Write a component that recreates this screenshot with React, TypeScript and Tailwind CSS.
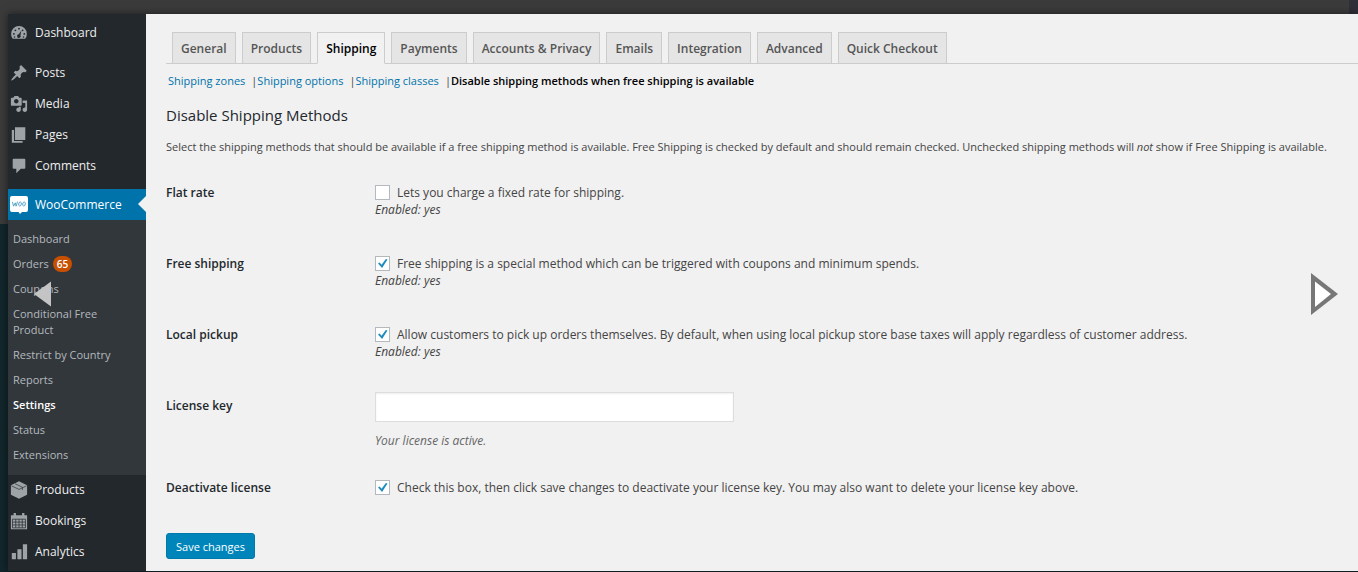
import type { ReactNode } from 'react';

const iconPaths = {
  posts:
    'M10.44 3.02l1.82-1.82 6.36 6.35-1.83 1.82c-1.05-.68-2.48-.57-3.41.36l-.75.75c-.92.93-1.04 2.35-.35 3.41l-1.83 1.82-2.41-2.41-2.8 2.79c-.42.42-3.38 2.71-3.8 2.29s1.86-3.39 2.28-3.81l2.79-2.79L4.1 9.36l1.83-1.82c1.05.69 2.48.57 3.4-.36l.75-.75c.93-.92 1.05-2.35.36-3.41z',
  media:
    'M13 11V4c0-.55-.45-1-1-1h-1.67L9 1H5L3.67 3H2c-.55 0-1 .45-1 1v7c0 .55.45 1 1 1h10c.55 0 1-.45 1-1zM7 4.5c1.38 0 2.5 1.12 2.5 2.5S8.38 9.5 7 9.5 4.5 8.38 4.5 7 5.62 4.5 7 4.5zM14 6h5v10.5c0 1.38-1.12 2.5-2.5 2.5S14 17.88 14 16.5s1.12-2.5 2.5-2.5c.17 0 .34.02.5.05V9h-3V6zm-4 8.05V13h2v3.5c0 1.38-1.12 2.5-2.5 2.5S7 17.88 7 16.5 8.12 14 9.5 14c.17 0 .34.02.5.05z',
  pages: 'M5.5 15.5V1.5h11.5v14H5.5zm-1 1.2h9.5v2H2V4.500h2.500v12.200z',
  comments: 'M4 2h12c.6 0 1 .4 1 1v9c0 .6-.4 1-1 1h-4l-5 5v-5H4c-.6 0-1-.4-1-1V3c0-.6.4-1 1-1z',
  analytics: 'M19 18V1.500h-4.700v16.500h4.700zm-6.200 0V7H8.200v11h4.600zm-6.200 0v-7H2v7h4.600z',
};

function Icon({ children }: { children: ReactNode }) {
  return (
    <svg viewBox="0 0 20 20" className="size-[18px] shrink-0 fill-[#9ea3a8]" aria-hidden="true">
      {children}
    </svg>
  );
}

function DashboardIcon() {
  return (
    <Icon>
      <path d="M3.2 16.5h13.6A8.7 8.7 0 0 0 18.7 11 8.7 8.7 0 0 0 1.3 11c0 2.1.7 4 1.9 5.5z" />
      <g className="fill-[#23282d]">
        <circle cx="10" cy="5.2" r="1" />
        <circle cx="6" cy="7" r="1" />
        <circle cx="14" cy="7" r="1" />
        <circle cx="4.3" cy="11" r="1" />
        <circle cx="15.9" cy="11" r="1" />
        <circle cx="5" cy="14.4" r=".9" />
        <circle cx="15" cy="14.4" r=".9" />
        <path d="M12.6 7.2l-1 5.2a2 2 0 1 1-1.8-1z" />
      </g>
    </Icon>
  );
}

function ProductsIcon() {
  return (
    <Icon>
      <path d="M10 .4l9 4.3v10.600L10 19.700l-9-4.400V4.700z" />
      <path
        d="M1.600 5.400L10 9.300l8.400-3.900M5.600 3l8.200 4v3"
        fill="none"
        className="stroke-[#23282d]"
        strokeWidth=".7"
      />
    </Icon>
  );
}

function BookingsIcon() {
  return (
    <Icon>
      <path d="M1 3.500h3V1h2.600v2.500h6.800V1H16v2.500h3V19.200H1z" />
      <path
        d="M2.8 8h14.400v9.600H2.800zM2.800 11.200h14.400M2.800 14.400h14.400M6.400 8v9.600M10 8v9.600M13.600 8v9.600"
        fill="none"
        className="stroke-[#23282d]"
        strokeWidth=".8"
      />
    </Icon>
  );
}

function WooIcon() {
  return (
    <svg viewBox="0 0 18 18" className="size-[18px] shrink-0" aria-hidden="true">
      <path
        className="fill-white"
        d="M2 0h14a2 2 0 0 1 2 2v12a2 2 0 0 1-2 2h-4l-2 2-1.5-2H2a2 2 0 0 1-2-2V2a2 2 0 0 1 2-2z"
      />
      <path
        className="stroke-[#4a9cc5]"
        fill="none"
        strokeWidth=".9"
        strokeLinejoin="round"
        d="M2.4 5.8l1.2 4.4 1.7-3.4.8 3.4c.5-1.2.9-3 1.4-4.6"
      />
      <g className="stroke-[#4a9cc5]" fill="none" strokeWidth=".9">
        <ellipse cx="10" cy="8" rx="1.3" ry="2" transform="rotate(12 10 8)" />
        <ellipse cx="14" cy="8" rx="1.3" ry="2" transform="rotate(12 14 8)" />
      </g>
    </svg>
  );
}

function MenuLink({ icon, label }: { icon: ReactNode; label: string }) {
  return (
    <li>
      <a href="#" className="flex h-[30px] items-center gap-[7px] pl-[2px] text-[12px] text-[#eeeeee]">
        {icon}
        {label}
      </a>
    </li>
  );
}

const submenu = [
  { label: 'Dashboard' },
  { label: 'Orders', badge: 65 },
  { label: 'Coupons' },
  { label: 'Conditional Free Product' },
  { label: 'Restrict by Country' },
  { label: 'Reports' },
  { label: 'Settings', current: true },
  { label: 'Status' },
  { label: 'Extensions' },
];

function Sidebar() {
  return (
    <nav className="w-[138px] shrink-0 bg-[#23282d] pt-1" aria-label="Admin menu">
      <ul>
        <MenuLink icon={<DashboardIcon />} label="Dashboard" />
      </ul>
      <ul className="mt-[10px] flex flex-col gap-px">
        <MenuLink icon={<Icon><path d={iconPaths.posts} /></Icon>} label="Posts" />
        <MenuLink icon={<Icon><path d={iconPaths.media} /></Icon>} label="Media" />
        <MenuLink icon={<Icon><path d={iconPaths.pages} /></Icon>} label="Pages" />
        <MenuLink icon={<Icon><path d={iconPaths.comments} /></Icon>} label="Comments" />
      </ul>
      <div className="mt-2">
        <a
          href="#"
          className="relative flex h-[31px] items-center gap-[7px] bg-[#0073aa] pl-[2px] text-[12px] text-white"
        >
          <WooIcon />
          WooCommerce
          <span className="absolute top-[7px] right-0 border-y-8 border-r-8 border-y-transparent border-r-[#f1f1f1]" />
        </a>
        <ul className="bg-[#32373c] pt-[6px] pb-2 text-[11px] leading-4 text-[#b4b9be]">
          {submenu.map((item) => (
            <li key={item.label}>
              <a
                href="#"
                className={`flex items-center gap-1 py-1 pr-4 pl-[5px] ${
                  item.label === 'Conditional Free Product' ? 'min-h-[41px]' : 'min-h-[25px]'
                } ${item.current ? 'font-semibold text-white' : ''}`}
              >
                {item.label}
                {item.badge && (
                  <span className="rounded-full bg-[#c75000] px-1 text-[10px] font-semibold text-white">
                    {item.badge}
                  </span>
                )}
              </a>
            </li>
          ))}
        </ul>
      </div>
      <ul className="flex flex-col gap-px">
        <MenuLink icon={<ProductsIcon />} label="Products" />
        <MenuLink icon={<BookingsIcon />} label="Bookings" />
        <MenuLink icon={<Icon><path d={iconPaths.analytics} /></Icon>} label="Analytics" />
      </ul>
    </nav>
  );
}

const tabs = [
  'General',
  'Products',
  'Shipping',
  'Payments',
  'Accounts & Privacy',
  'Emails',
  'Integration',
  'Advanced',
  'Quick Checkout',
];

function Tabs() {
  return (
    <nav className="flex gap-[6px] border-b border-[#cccccc] pl-[6px]" aria-label="Settings tabs">
      {tabs.map((tab) => (
        <a
          key={tab}
          href="#"
          className={`-mb-px flex h-8 items-center border border-[#cccccc] px-2 pt-px text-[12px] font-semibold whitespace-nowrap ${
            tab === 'Shipping' ? 'border-b-[#f1f1f1] bg-[#f1f1f1] text-black' : 'bg-[#e5e5e5] text-[#555555]'
          }`}
        >
          {tab}
        </a>
      ))}
    </nav>
  );
}

function Row({ label, htmlFor, children }: { label: string; htmlFor: string; children: ReactNode }) {
  return (
    <div className="grid grid-cols-[209px_1fr]">
      <label htmlFor={htmlFor} className="pt-[5px] text-[12px] font-semibold text-[#23282d]">
        {label}
      </label>
      <div>{children}</div>
    </div>
  );
}

function CheckOption({
  id,
  text,
  checked = false,
  note,
}: {
  id: string;
  text: string;
  checked?: boolean;
  note?: string;
}) {
  return (
    <div className="pt-[5px] text-[12px]">
      <div className="flex items-center gap-[7px]">
        <span className="relative flex">
          <input
            id={id}
            type="checkbox"
            defaultChecked={checked}
            className="peer size-[15px] appearance-none border border-[#b4b9be] bg-white"
          />
          <svg
            viewBox="0 0 15 15"
            className="pointer-events-none absolute inset-0 hidden size-[15px] peer-checked:block"
            aria-hidden="true"
          >
            <path d="M3 7.4l1.6-.9 2 2.200L10.800 3l1.700.6-5.400 8.400z" className="fill-[#1e8cbe]" />
          </svg>
        </span>
        <label htmlFor={id}>{text}</label>
      </div>
      {note && <p className="text-[12px] leading-[17px] italic">{note}</p>}
    </div>
  );
}

function SettingsForm() {
  return (
    <form className="pl-5 leading-[17px] text-[#444444]" onSubmit={(e) => e.preventDefault()}>
      <h1 className="mt-4 text-[15px] leading-5 font-medium text-[#23282d]">Disable Shipping Methods</h1>
      <p className="mt-[14px] text-[11px] leading-4 text-[#444444]">
        Select the shipping methods that should be available if a free shipping method is available. Free
        Shipping is checked by default and should remain checked. Unchecked shipping methods will{' '}
        <em>not</em> show if Free Shipping is available.
      </p>
      <div className="mt-6 flex flex-col gap-8">
        <Row label="Flat rate" htmlFor="flat">
          <CheckOption id="flat" text="Lets you charge a fixed rate for shipping." note="Enabled: yes" />
        </Row>
        <Row label="Free shipping" htmlFor="free">
          <CheckOption
            id="free"
            text="Free shipping is a special method which can be triggered with coupons and minimum spends."
            checked
            note="Enabled: yes"
          />
        </Row>
        <Row label="Local pickup" htmlFor="pickup">
          <CheckOption
            id="pickup"
            text="Allow customers to pick up orders themselves. By default, when using local pickup store base taxes will apply regardless of customer address."
            checked
            note="Enabled: yes"
          />
        </Row>
      </div>
      <div className="mt-8 flex flex-col gap-[25px]">
        <Row label="License key" htmlFor="license">
          <input
            id="license"
            type="text"
            className="block h-[30px] w-full max-w-[359px] border border-[#dddddd] bg-white px-2 text-[12px] shadow-[inset_0_1px_2px_rgba(0,0,0,0.07)]"
          />
          <p className="mt-[10px] text-[12px] text-[#666666] italic">Your license is active.</p>
        </Row>
        <Row label="Deactivate license" htmlFor="deactivate">
          <CheckOption
            id="deactivate"
            text="Check this box, then click save changes to deactivate your license key. You may also want to delete your license key above."
            checked
          />
        </Row>
      </div>
      <button
        type="submit"
        className="mt-[37px] mb-3 block h-[26px] rounded-[3px] border border-[#0079ab] bg-[#0085ba] px-[9px] text-[11px] text-white"
      >
        Save changes
      </button>
    </form>
  );
}

const sections = ['Shipping zones', 'Shipping options', 'Shipping classes'];

export default function App() {
  return (
    <div className="relative flex min-h-screen flex-col bg-[linear-gradient(#3b3b3b_224px,#12262c_224px)] pb-px pl-2 font-['Open_Sans','Noto_Sans',sans-serif]">
      <div className="flex h-[14px] shrink-0 justify-end">
        <div className="w-[9px] bg-[#2f3038]" />
      </div>
      <div className="flex grow shadow-[0_0_8px_rgba(0,0,0,0.5)]">
        <Sidebar />
        <main className="min-w-0 grow bg-[#f1f1f1]">
          <div className="pt-[18px] pl-5">
            <Tabs />
          </div>
          <div className="flex pt-2 pl-[22px] text-[11px] leading-[17px] whitespace-nowrap text-[#0073aa]">
            {sections.map((section) => (
              <span key={section} className="flex gap-[6px]">
                <a href="#">{section}</a>
                <span className="text-[#444444]">|</span>
              </span>
            ))}
            <a href="#" className="font-semibold text-black">
              Disable shipping methods when free shipping is available
            </a>
          </div>
          <SettingsForm />
        </main>
      </div>
      <button type="button" aria-label="Previous" className="absolute top-[281px] left-[33px]">
        <svg viewBox="0 0 18 26" className="h-[26px] w-[18px]">
          <path d="M18 0.5v25L1 13z" className="fill-[#c4c4c4]" />
        </svg>
      </button>
      <button type="button" aria-label="Next" className="absolute top-[273px] right-5">
        <svg viewBox="0 0 28 42" className="h-[42px] w-7">
          <path d="M1 0l27 21L1 42z" className="fill-[#777777]" />
          <path d="M5 8.5L21 21 5 34z" className="fill-white" />
        </svg>
      </button>
    </div>
  );
}
